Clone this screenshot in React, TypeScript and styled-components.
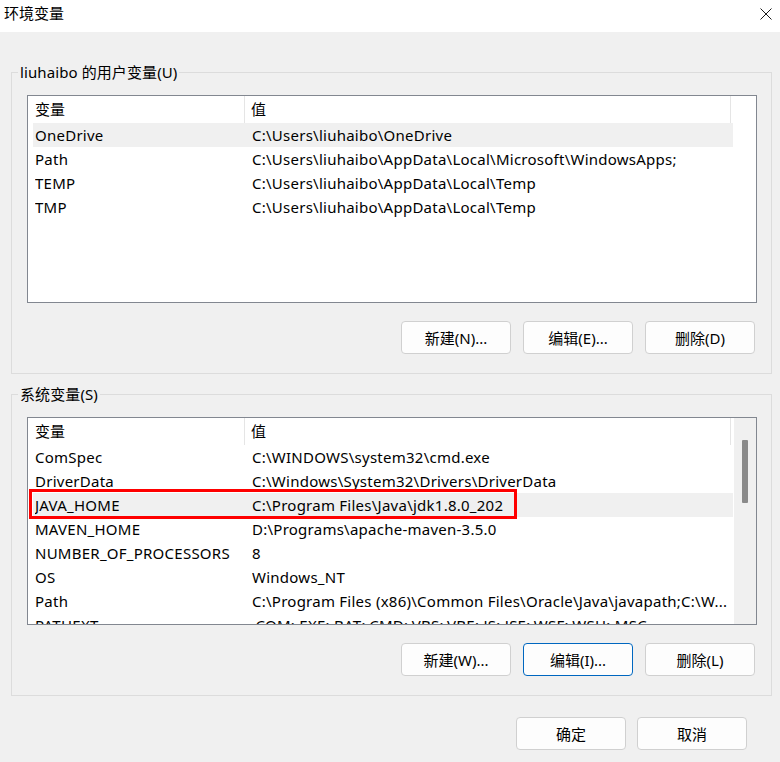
import React from "react";
import styled, { createGlobalStyle } from "styled-components";

const GlobalStyle = createGlobalStyle`
  html, body {
    margin: 0;
    padding: 0;
    background: #f0f0f0;
  }
  body {
    font-family: "Noto Sans", "Noto Sans CJK SC", sans-serif;
    font-size: 15px;
    color: #000;
  }
`;

type Variable = { name: string; value: string; selected?: boolean; marked?: boolean };

const userVars: Variable[] = [
  { name: "OneDrive", value: "C:\\Users\\liuhaibo\\OneDrive", selected: true },
  { name: "Path", value: "C:\\Users\\liuhaibo\\AppData\\Local\\Microsoft\\WindowsApps;" },
  { name: "TEMP", value: "C:\\Users\\liuhaibo\\AppData\\Local\\Temp" },
  { name: "TMP", value: "C:\\Users\\liuhaibo\\AppData\\Local\\Temp" },
];

const systemVars: Variable[] = [
  { name: "ComSpec", value: "C:\\WINDOWS\\system32\\cmd.exe" },
  { name: "DriverData", value: "C:\\Windows\\System32\\Drivers\\DriverData" },
  { name: "JAVA_HOME", value: "C:\\Program Files\\Java\\jdk1.8.0_202", selected: true, marked: true },
  { name: "MAVEN_HOME", value: "D:\\Programs\\apache-maven-3.5.0" },
  { name: "NUMBER_OF_PROCESSORS", value: "8" },
  { name: "OS", value: "Windows_NT" },
  { name: "Path", value: "C:\\Program Files (x86)\\Common Files\\Oracle\\Java\\javapath;C:\\W..." },
  { name: "PATHEXT", value: ".COM;.EXE;.BAT;.CMD;.VBS;.VBE;.JS;.JSE;.WSF;.WSH;.MSC" },
];

export default function App() {
  return (
    <Window>
      <GlobalStyle />
      <TitleBar>
        <Title>环境变量</Title>
        <CloseButton aria-label="关闭">
          <svg width="12" height="12" viewBox="0 0 12 12">
            <path d="M0.5 0.5 L11.5 11.5 M11.5 0.5 L0.5 11.5" stroke="#1a1a1a" strokeWidth="1" fill="none" />
          </svg>
        </CloseButton>
      </TitleBar>

      <Content>
        <Group>
          <Legend>liuhaibo 的用户变量(U)</Legend>
          <VariableList rows={userVars} />
          <ButtonRow>
            <Button>新建(N)...</Button>
            <Button>编辑(E)...</Button>
            <Button>删除(D)</Button>
          </ButtonRow>
        </Group>

        <Group $spaced>
          <Legend>系统变量(S)</Legend>
          <VariableList rows={systemVars} scrollable />
          <ButtonRow>
            <Button>新建(W)...</Button>
            <Button $focused>编辑(I)...</Button>
            <Button>删除(L)</Button>
          </ButtonRow>
        </Group>

        <DialogButtons>
          <Button>确定</Button>
          <Button>取消</Button>
        </DialogButtons>
      </Content>
    </Window>
  );
}

function VariableList({ rows, scrollable }: { rows: Variable[]; scrollable?: boolean }) {
  return (
    <ListBox>
      <ListBody>
        <HeaderRow>
          <HeaderCell $width={212}>变量</HeaderCell>
          <HeaderCell $width={486} $pad={6}>值</HeaderCell>
        </HeaderRow>
        {rows.map((row) => (
          <Row key={row.name} $selected={row.selected}>
            <NameCell>{row.name}</NameCell>
            <ValueCell>{row.value}</ValueCell>
            {row.marked && <Marker />}
          </Row>
        ))}
      </ListBody>
      <Track $visible={scrollable}>{scrollable && <Thumb />}</Track>
    </ListBox>
  );
}

const Window = styled.div`
  width: 780px;
  height: 762px;
  overflow: hidden;
  background: #f0f0f0;
`;

const TitleBar = styled.div`
  height: 32px;
  background: #fff;
  display: flex;
  justify-content: space-between;
  align-items: flex-start;
  box-sizing: border-box;
  padding: 3px 8px 0 4px;
`;

const Title = styled.div`
  line-height: 20px;
`;

const CloseButton = styled.div`
  display: flex;
  padding-top: 5px;
`;

const Content = styled.div`
  padding: 30px 8px 0 11px;
`;

const Group = styled.fieldset<{ $spaced?: boolean }>`
  margin: ${(p) => (p.$spaced ? "10px" : "0")} 0 0 0;
  padding: 13px 14px 19px 15px;
  border: 1px solid #dcdcdc;
  min-width: 0;
`;

const Legend = styled.legend`
  margin-left: -9px;
  padding: 0 2px;
  line-height: 20px;
  letter-spacing: 0.1px;
`;

const ListBox = styled.div`
  height: 208px;
  box-sizing: border-box;
  border: 1px solid #828790;
  background: #fff;
  display: flex;
  overflow: hidden;
`;

const ListBody = styled.div`
  width: 700px;
  margin-left: 5px;
`;

const HeaderRow = styled.div`
  display: flex;
  height: 27px;
  align-items: stretch;
`;

const HeaderCell = styled.div<{ $width: number; $pad?: number }>`
  width: ${(p) => p.$width}px;
  padding-left: ${(p) => p.$pad ?? 2}px;
  box-sizing: border-box;
  border-right: 1px solid #e5e5e5;
  line-height: 26px;
`;

const Row = styled.div<{ $selected?: boolean }>`
  position: relative;
  display: flex;
  height: 24px;
  line-height: 24px;
  padding-left: 2px;
  letter-spacing: 0.25px;
  background: ${(p) => (p.$selected ? "#f0f0f0" : "transparent")};
`;

const NameCell = styled.div`
  width: 217px;
  flex-shrink: 0;
  white-space: nowrap;
  overflow: hidden;
`;

const ValueCell = styled.div`
  flex: 1;
  white-space: nowrap;
  overflow: hidden;
`;

const Marker = styled.div`
  position: absolute;
  left: -4px;
  top: -4px;
  width: 488px;
  height: 30px;
  box-sizing: border-box;
  border: 3px solid #ff0000;
  pointer-events: none;
`;

const Track = styled.div<{ $visible?: boolean }>`
  width: 22px;
  margin-left: auto;
  background: ${(p) => (p.$visible ? "#f0f0f0" : "#fff")};
  padding-top: 22px;
  box-sizing: border-box;
`;

const Thumb = styled.div`
  width: 6px;
  height: 63px;
  margin-left: 8px;
  background: #8a8a8a;
  border-radius: 1px;
`;

const ButtonRow = styled.div`
  display: flex;
  justify-content: flex-end;
  gap: 12px;
  margin-top: 18px;
  padding-right: 2px;
`;

const Button = styled.button<{ $focused?: boolean }>`
  width: 110px;
  height: 33px;
  box-sizing: border-box;
  font: inherit;
  color: #000;
  background: #fdfdfd;
  border: 1px solid ${(p) => (p.$focused ? "#0067c0" : "#d0d0d0")};
  border-radius: 4px;
  padding: 0;
`;

const DialogButtons = styled.div`
  display: flex;
  justify-content: flex-end;
  gap: 11px;
  margin-top: 21px;
  padding-right: 25px;
`;
